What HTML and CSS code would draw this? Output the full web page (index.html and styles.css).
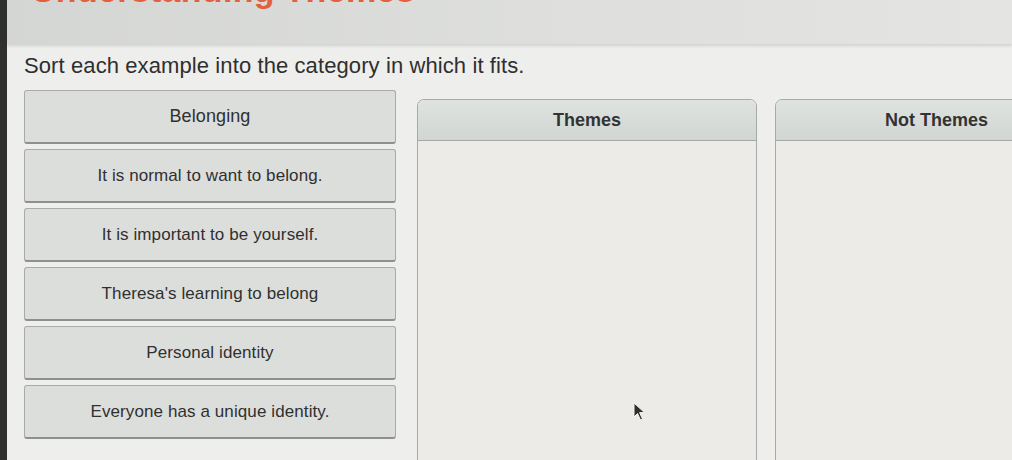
FILE: index.html
```html
<!DOCTYPE html>
<html lang="en">
<head>
    <meta charset="UTF-8">
    <meta name="viewport" content="width=device-width, initial-scale=1.0">
    <title>Understanding Themes</title>
    <link rel="stylesheet" href="styles.css">
</head>
<body>
    <header class="top-band">
        <h1 class="title">Understanding Themes</h1>
    </header>

    <main class="panel">
        <p class="prompt">Sort each example into the category in which it fits.</p>

        <div class="sort-area">
            <div class="card-list">
                <div class="card card-first">Belonging</div>
                <div class="card">It is normal to want to belong.</div>
                <div class="card">It is important to be yourself.</div>
                <div class="card">Theresa's learning to belong</div>
                <div class="card">Personal identity</div>
                <div class="card">Everyone has a unique identity.</div>
            </div>

            <div class="bin">
                <div class="bin-head">Themes</div>
                <div class="bin-body"></div>
            </div>

            <div class="bin bin-wide">
                <div class="bin-head">Not Themes</div>
                <div class="bin-body"></div>
            </div>
        </div>

        <!-- mouse pointer resting over the Themes bin -->
        <svg class="pointer" width="14" height="20" viewBox="0 0 14 20">
            <path d="M1 1 L1 15 L4.5 11.5 L7.5 18 L9.5 17 L6.6 10.6 L11.5 10.6 Z" fill="#2e2e2e" stroke="#f4f4f2" stroke-width="1"/>
        </svg>
    </main>
</body>
</html>
```

FILE: styles.css
```css
html, body {
    margin: 0;
    padding: 0;
    height: 100%;
    font-family: "Liberation Sans", Arial, sans-serif;
}
body {
    background: #eeeeec;
    overflow: hidden;
    position: relative;
    border-left: 7px solid #2f2f30; /* monitor bezel edge */
    box-sizing: border-box;
}
.top-band {
    height: 44px;
    background: linear-gradient(90deg, #d4d6d3, #dfe0dd 60%, #e4e5e2);
    box-shadow: 0 2px 3px rgba(0, 0, 0, 0.12);
    overflow: hidden;
}
.title {
    margin: -29px 0 0 24px;
    font-size: 34px;
    font-weight: bold;
    color: #e2603e;
    letter-spacing: 0.3px;
}
.panel {
    padding: 8px 0 0 17px;
}
.prompt {
    margin: 0 0 10px 0;
    font-size: 22px;
    line-height: 28px;
    color: #2f2f2f;
    letter-spacing: 0.1px;
}
.sort-area {
    display: grid;
    grid-template-columns: 372px 340px 330px;
    column-gap: 21px;
    align-items: start;
}
.card-list {
    display: flex;
    flex-direction: column;
    gap: 5px;
}
.card {
    height: 54px;
    display: flex;
    align-items: center;
    justify-content: center;
    background: #dcdedc;
    border: 1px solid #a9aba9;
    border-bottom: 2px solid #8e908e;
    border-radius: 3px;
    box-sizing: border-box;
    font-size: 17px;
    color: #303030;
    letter-spacing: 0.1px;
}
.card-first {
    font-size: 18px;
}
.bin {
    margin-top: 9px;
    height: 380px;
    border: 1px solid #a8aaa8;
    border-radius: 7px 7px 0 0;
    background: #ebebe8;
    overflow: hidden;
}
.bin-wide {
    margin-left: -3px;
}
.bin-head {
    height: 40px;
    display: flex;
    align-items: center;
    justify-content: center;
    background: linear-gradient(180deg, #dfe3e0, #d2d6d3);
    border-bottom: 1px solid #a5a8a6;
    font-size: 18px;
    font-weight: bold;
    color: #333;
}
.bin-wide .bin-head {
    padding-right: 10px;
}
.bin-body {
    height: 100%;
    background: #ecebe8;
}
.pointer {
    position: absolute;
    left: 626px;
    top: 402px;
}
```
